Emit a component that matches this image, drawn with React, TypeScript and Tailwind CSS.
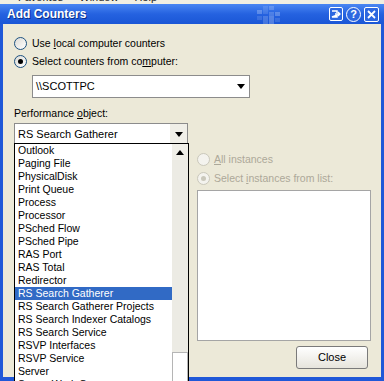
// Add Counters dialog (XP style)

const FONT = "font-['Liberation_Sans',Arial,sans-serif]";

const objects = [
  "Outlook",
  "Paging File",
  "PhysicalDisk",
  "Print Queue",
  "Process",
  "Processor",
  "PSched Flow",
  "PSched Pipe",
  "RAS Port",
  "RAS Total",
  "Redirector",
  "RS Search Gatherer",
  "RS Search Gatherer Projects",
  "RS Search Indexer Catalogs",
  "RS Search Service",
  "RSVP Interfaces",
  "RSVP Service",
  "Server",
  "Server Work Queues",
];

function Radio({ checked, disabled }: { checked?: boolean; disabled?: boolean }) {
  return (
    <div
      className={`w-[13px] h-[13px] rounded-full border flex items-center justify-center flex-shrink-0 ${
        disabled
          ? "border-[#cac8bb] bg-[#f4f3ee]"
          : "border-[#1c5180] bg-gradient-to-br from-[#dcdbd5] to-white"
      }`}
    >
      {checked && (
        <div
          className={`w-[5px] h-[5px] rounded-full ${disabled ? "bg-[#cac8bb]" : "bg-black"}`}
        />
      )}
    </div>
  );
}

function Arrow({ up }: { up?: boolean }) {
  return (
    <svg width="8" height="5" viewBox="0 0 8 5">
      {up ? <path d="M0 5 L4 0 L8 5 Z" fill="#000" /> : <path d="M0 0 L8 0 L4 5 Z" fill="#000" />}
    </svg>
  );
}

function TitleButtons() {
  return (
    <div className="flex items-center gap-[3px]">
      <div className="w-[14px] h-[14px] border border-white rounded-[2px] flex items-center justify-center bg-[#2d67e0]">
        <svg width="10" height="8" viewBox="0 0 10 8">
          <path d="M1 1 H6 V3 M6 5 V7 H1 Z" fill="none" stroke="#fff" strokeWidth="1.5" />
          <path d="M4 4 H9 M7 2 L9 4 L7 6" fill="none" stroke="#fff" strokeWidth="1.3" />
        </svg>
      </div>
      <div className="w-[15px] h-[15px] border border-white rounded-full flex items-center justify-center bg-[#2d67e0] text-white text-[11px] font-bold leading-none">
        ?
      </div>
      <div className="w-[15px] h-[15px] border border-white rounded-[2px] flex items-center justify-center bg-[#2d67e0]">
        <svg width="9" height="9" viewBox="0 0 9 9">
          <path d="M1 1 L8 8 M8 1 L1 8" stroke="#fff" strokeWidth="1.8" />
        </svg>
      </div>
    </div>
  );
}

function Checker() {
  const cells = [
    [8, 2], [14, 2], [2, 6], [8, 6], [14, 8], [20, 8], [2, 12], [8, 12], [14, 12], [20, 14], [8, 16], [14, 16],
  ];
  return (
    <svg width="28" height="20" viewBox="0 0 28 20">
      {cells.map(([x, y], i) => (
        <rect key={i} x={x} y={y} width="5" height="4" fill="#ffffff" opacity={0.12 + (i % 3) * 0.06} />
      ))}
    </svg>
  );
}

export default function App() {
  return (
    <div className={`w-[384px] h-[381px] overflow-hidden relative bg-[#f1efe2] ${FONT} flex flex-col`}>
      {/* menu bar of the window behind */}
      <div className="h-[4px] overflow-hidden bg-[#f1efe2]">
        <div className="flex gap-[16px] pl-[18px] -mt-[9px] text-[11px] leading-[13px] text-[#222]">
          <span>Favorites</span>
          <span>Window</span>
          <span>Help</span>
        </div>
      </div>

      {/* dialog window */}
      <div className="flex-1 flex flex-col bg-[#2058d8]">
        {/* title bar */}
        <div className="h-[20px] flex items-center pl-[7px] pr-[5px] bg-gradient-to-b from-[#4a86f2] via-[#2562e0] to-[#1a56d6]">
          <span className="text-white font-bold text-[12px] leading-none flex-1 [text-shadow:1px_1px_0_#0a2f8a]">
            Add Counters
          </span>
          <Checker />
          <div className="w-[46px]" />
          <TitleButtons />
        </div>

        {/* body */}
        <div className="flex-1 mx-[3px] mb-[4px] bg-[#ece9d8] pl-[11px] flex flex-col text-[10.5px] text-black">
          <div className="mt-[13px] flex items-center gap-[5px] h-[13px]">
            <Radio />
            <span>
              Use <u>l</u>ocal computer counters
            </span>
          </div>
          <div className="mt-[5px] flex items-center gap-[5px] h-[13px]">
            <Radio checked />
            <span>
              Select counters from co<u>m</u>puter:
            </span>
          </div>

          <div className="mt-[7px] ml-[18px] w-[218px] h-[23px] border border-[#8c8c8c] bg-white flex items-center">
            <span className="flex-1 pl-[3px] text-[11px]">\\SCOTTPC</span>
            <div className="w-[17px] h-full flex items-center justify-center">
              <Arrow />
            </div>
          </div>

          <div className="mt-[9px] h-[13px] flex items-center">
            <span>
              Performance <u>o</u>bject:
            </span>
          </div>

          <div className="mt-[3px] w-[174px] h-[22px] border border-[#8c8c8c] bg-white flex items-center">
            <span className="flex-1 pl-[3px] text-[11px]">RS Search Gatherer</span>
            <div className="w-[17px] h-full bg-[#f0efe8] flex items-center justify-center">
              <Arrow />
            </div>
          </div>

          <div className="flex">
            <div className="w-[183px] flex-shrink-0" />
            <div className="w-[174px] flex flex-col text-[#aca899]">
              <div className="mt-[8px] flex items-center gap-[4px] h-[13px]">
                <Radio disabled />
                <span>
                  <u>A</u>ll instances
                </span>
              </div>
              <div className="mt-[6px] flex items-center gap-[4px] h-[13px]">
                <Radio checked disabled />
                <span>
                  Select <u>i</u>nstances from list:
                </span>
              </div>
              <div className="mt-[5px] h-[151px] border border-[#a5a5a5] bg-white" />
              <div className="mt-[5px] self-end mr-[3px] w-[72px] h-[23px] rounded-[3px] border border-[#7a7a7a] bg-gradient-to-b from-white to-[#e6e4dc] flex items-center justify-center text-black text-[11px]">
                Close
              </div>
            </div>
          </div>
        </div>
      </div>

      {/* open drop-down list */}
      <div className="absolute left-[14px] top-[143px] w-[175px] h-[260px] border border-black bg-white flex text-[10.5px]">
        <div className="flex-1">
          {objects.map((o) => (
            <div
              key={o}
              className={`h-[13px] leading-[13px] pl-[3px] whitespace-nowrap ${
                o === "RS Search Gatherer" ? "bg-[#316ac5] text-white" : "text-black"
              }`}
            >
              {o}
            </div>
          ))}
        </div>
        <div className="w-[16px] flex flex-col bg-[#ecebe4]">
          <div className="h-[16px] flex items-center justify-center bg-[#f0efe8]">
            <Arrow up />
          </div>
          <div className="h-[192px]" />
          <div className="flex-1 bg-white border border-b-0 border-[#b5b5b5]" />
        </div>
      </div>
    </div>
  );
}
